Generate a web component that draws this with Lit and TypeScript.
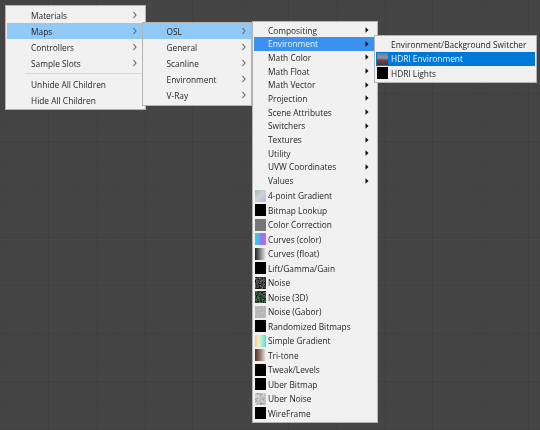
import { LitElement, html, css, svg } from "lit";
import { customElement } from "lit/decorators.js";

type Row = { t: string; sw?: string; arrow?: "chev" | "tri"; hl?: string };

const chev = svg`<path d="M1.5 1 L4 4 L1.5 7" fill="none" stroke="#666" stroke-width="1.1"/>`;
const tri = svg`<path d="M1.5 1.2 L4.5 4 L1.5 6.8 Z" fill="#111"/>`;

const m1: Row[] = [
  { t: "Materials", arrow: "chev" },
  { t: "Maps", arrow: "chev", hl: "soft" },
  { t: "Controllers", arrow: "chev" },
  { t: "Sample Slots", arrow: "chev" },
];
const m1b: Row[] = [{ t: "Unhide All Children" }, { t: "Hide All Children" }];
const m2: Row[] = [
  { t: "OSL", arrow: "chev", hl: "soft" },
  { t: "General", arrow: "chev" },
  { t: "Scanline", arrow: "chev" },
  { t: "Environment", arrow: "chev" },
  { t: "V-Ray", arrow: "chev" },
];
const m3a: Row[] = [
  "Compositing", "Environment", "Math Color", "Math Float", "Math Vector", "Projection",
  "Scene Attributes", "Switchers", "Textures", "Utility", "UVW Coordinates", "Values",
].map((t) => ({ t, arrow: "tri" as const, hl: t === "Environment" ? "mid" : undefined }));
const m3b: Row[] = [
  { t: "4-point Gradient", sw: "grad4" },
  { t: "Bitmap Lookup", sw: "black" },
  { t: "Color Correction", sw: "gray" },
  { t: "Curves (color)", sw: "curvec" },
  { t: "Curves (float)", sw: "curvef" },
  { t: "Lift/Gamma/Gain", sw: "black" },
  { t: "Noise", sw: "noise" },
  { t: "Noise (3D)", sw: "noise3" },
  { t: "Noise (Gabor)", sw: "gabor" },
  { t: "Randomized Bitmaps", sw: "black" },
  { t: "Simple Gradient", sw: "simple" },
  { t: "Tri-tone", sw: "tri" },
  { t: "Tweak/Levels", sw: "black" },
  { t: "Uber Bitmap", sw: "black" },
  { t: "Uber Noise", sw: "uber" },
  { t: "WireFrame", sw: "black" },
];
const m4: Row[] = [
  { t: "Environment/Background Switcher" },
  { t: "HDRI Environment", sw: "hdri", hl: "strong" },
  { t: "HDRI Lights", sw: "black" },
];

@customElement("app-root")
export class AppRoot extends LitElement {
  static styles = css`
    :host {
      display: block;
      position: relative;
      width: 540px;
      height: 430px;
      overflow: hidden;
      background-color: #444444;
      background-image:
        repeating-linear-gradient(90deg, rgba(0,0,0,.06) 0 1px, transparent 1px 48px),
        repeating-linear-gradient(0deg, rgba(0,0,0,.06) 0 1px, transparent 1px 48px),
        repeating-linear-gradient(90deg, rgba(255,255,255,.012) 0 1px, transparent 1px 10px),
        repeating-linear-gradient(0deg, rgba(255,255,255,.012) 0 1px, transparent 1px 10px);
      font-family: "Open Sans", "Noto Sans", sans-serif;
      font-size: 8.35px;
      color: #1f1f1f;
    }
    .menu {
      position: absolute;
      box-sizing: border-box;
      background: #f1f1f1;
      border: 1px solid #b4b4b4;
      display: flex;
      flex-direction: column;
      filter: blur(0.35px);
    }
    .m1 { left: 5px; top: 5px; width: 141px; height: 105px; padding: 1px; }
    .m2 { left: 142px; top: 22px; width: 110px; height: 84px; }
    .m3 { left: 252px; top: 21px; width: 126px; height: 402px; padding: 1px; }
    .m4 { left: 374px; top: 35px; width: 163px; height: 48px; padding: 1px; }
    .row { display: flex; align-items: center; white-space: nowrap; flex: none; }
    .m1 .row, .m2 .row { height: 16px; }
    .m1 .row { padding-left: 24px; padding-right: 6px; }
    .m2 .row { padding-left: 23.5px; padding-right: 4px; }
    .a { padding-top: 0.2px; }
    .m3 .a .row { height: 13.7px; padding-left: 14px; padding-right: 6px; }
    .b { padding-top: 1.3px; display: flex; flex-direction: column; }
    .m3 .b .row { height: 14.47px; padding-left: 1px; }
    .m4 .row { height: 14.5px; padding-left: 1px; }
    .m4 .plain { padding-left: 15px; }
    .label { flex: 1; }
    .arrow { flex: none; width: 6px; height: 8px; }
    .sw { flex: none; display: block; width: 11px; height: 12px; margin-right: 2px; }
    .m4 .sw { margin-right: 3px; }
    .sep { height: 1px; background: #d8d8d8; margin: 2px 1px 2px 18px; flex: none; }
    .hl-soft { background: #90c8f6; }
    .hl-mid { background: #3a92ee; color: #e8f2fd; }
    .hl-strong { background: #0078d7; color: #f2f8fd; }
    .black { background: #000; }
    .gray { background: #767676; }
    .grad4 { background: linear-gradient(135deg, #9fbfa8 0%, #d0d3da 50%, #b7b4d9 100%); }
    .curvec { background: linear-gradient(90deg, #30d8c8 0%, #50b0f0 35%, #9a70f0 60%, #e060d8 100%); }
    .curvef { background: linear-gradient(90deg, #202020, #f0f0f0); }
    .simple { background: linear-gradient(90deg, #f0c890 0%, #f4efc0 35%, #a0f0d0 65%, #50d8e8 100%); }
    .tri { background: linear-gradient(90deg, #4a3024 0%, #a08070 50%, #f2eeea 100%); }
    .hdri { background: linear-gradient(180deg, #6f7f96 0%, #8a93a4 40%, #7a3f45 62%, #3a3a40 100%); }
    .defs { position: absolute; }
  `;

  private swatch(kind: string) {
    const noisy: Record<string, string> = { noise: "fn", noise3: "f3", gabor: "fg", uber: "fu" };
    if (noisy[kind]) {
      return html`<svg class="sw" viewBox="0 0 11 12"><rect width="11" height="12" filter="url(#${noisy[kind]})"/></svg>`;
    }
    return html`<span class="sw ${kind}"></span>`;
  }

  private row(r: Row) {
    return html`<div class="row ${r.hl ? "hl-" + r.hl : ""} ${!r.sw && !r.arrow ? "plain" : ""}">
      ${r.sw ? this.swatch(r.sw) : ""}
      <span class="label">${r.t}</span>
      ${r.arrow ? html`<svg class="arrow" viewBox="0 0 6 8">${r.arrow === "chev" ? chev : tri}</svg>` : ""}
    </div>`;
  }

  render() {
    return html`
      <svg class="defs" width="0" height="0">
        <filter id="fn" x="0" y="0" width="100%" height="100%" color-interpolation-filters="sRGB">
          <feTurbulence type="fractalNoise" baseFrequency="0.7" numOctaves="2" seed="3"/>
          <feColorMatrix type="matrix" values="1 0 0 0 -0.25  1 0 0 0 -0.25  1 0 0 0 -0.25  0 0 0 0 1"/>
        </filter>
        <filter id="f3" x="0" y="0" width="100%" height="100%" color-interpolation-filters="sRGB">
          <feTurbulence type="fractalNoise" baseFrequency="0.7" numOctaves="2" seed="8"/>
          <feColorMatrix type="matrix" values=".7 0 0 0 -0.15  .9 0 0 0 -0.15  .8 0 0 0 -0.17  0 0 0 0 1"/>
        </filter>
        <filter id="fg" x="0" y="0" width="100%" height="100%" color-interpolation-filters="sRGB">
          <feTurbulence type="fractalNoise" baseFrequency="0.6" numOctaves="1" seed="5"/>
          <feColorMatrix type="matrix" values=".15 0 0 0 .65  .15 0 0 0 .65  .15 0 0 0 .65  0 0 0 0 1"/>
        </filter>
        <filter id="fu" x="0" y="0" width="100%" height="100%" color-interpolation-filters="sRGB">
          <feTurbulence type="fractalNoise" baseFrequency="0.4" numOctaves="2" seed="11"/>
          <feColorMatrix type="matrix" values=".5 0 0 0 .5  .5 0 0 0 .5  .5 0 0 0 .5  0 0 0 0 1"/>
        </filter>
      </svg>
      <div class="menu m1">${m1.map((r) => this.row(r))}<div class="sep"></div>${m1b.map((r) => this.row(r))}</div>
      <div class="menu m2">${m2.map((r) => this.row(r))}</div>
      <div class="menu m3">
        <div class="a">${m3a.map((r) => this.row(r))}</div>
        <div class="b">${m3b.map((r) => this.row(r))}</div>
      </div>
      <div class="menu m4">${m4.map((r) => this.row(r))}</div>
    `;
  }
}
